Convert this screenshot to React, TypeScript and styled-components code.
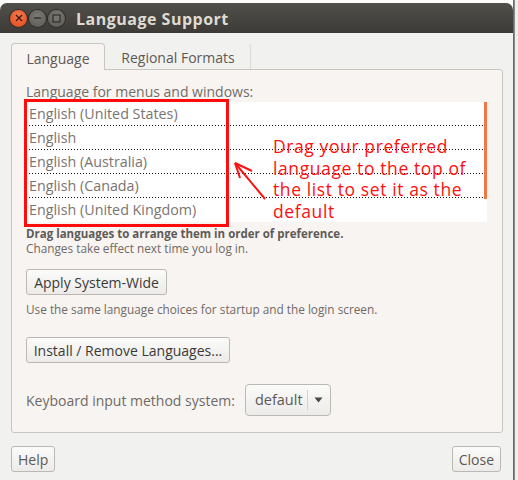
import React from "react";
import styled, { createGlobalStyle } from "styled-components";

const GlobalStyle = createGlobalStyle`
  html, body {
    margin: 0;
    padding: 0;
    background: #fbfbfb;
  }
  body {
    font-family: "Open Sans", "Noto Sans", sans-serif;
  }
`;

const languages = [
  "English (United States)",
  "English",
  "English (Australia)",
  "English (Canada)",
  "English (United Kingdom)",
];

const App: React.FC = () => {
  return (
    <>
      <GlobalStyle />
      <Screen>
        <Window>
          <TitleBar>
            <WinButtons>
              <WinButton kind="close">
                <svg width="8" height="8" viewBox="0 0 8 8">
                  <path d="M1 1L7 7M7 1L1 7" stroke="#3a1a10" strokeWidth="1.4" />
                </svg>
              </WinButton>
              <WinButton kind="other">
                <svg width="9" height="8" viewBox="0 0 9 8">
                  <path d="M1 4H8" stroke="#2e2d2a" strokeWidth="1.4" />
                </svg>
              </WinButton>
              <WinButton kind="other">
                <svg width="9" height="9" viewBox="0 0 9 9">
                  <rect x="1" y="1" width="7" height="7" fill="none" stroke="#2e2d2a" strokeWidth="1.2" />
                </svg>
              </WinButton>
            </WinButtons>
            <Title>Language Support</Title>
          </TitleBar>

          <Body>
            <Tabs>
              <Tab active>Language</Tab>
              <Tab>Regional Formats</Tab>
            </Tabs>
            <Panel>
              <Label>Language for menus and windows:</Label>
              <ListArea>
                <List>
                  {languages.map((l, i) => (
                    <Row key={l} last={i === languages.length - 1}>
                      <RowText>{l}</RowText>
                      <ScrollMark visible={i < 4} />
                    </Row>
                  ))}
                </List>
                <RedBox />
                <Arrow width="40" height="48" viewBox="0 0 40 48">
                  <path d="M33 46L3 10" stroke="#ff1010" strokeWidth="2" fill="none" />
                  <path d="M3 10L20 18M3 10L8 25" stroke="#ff1010" strokeWidth="2" fill="none" />
                </Arrow>
                <Note>
                  <NoteLine>Drag your preferred</NoteLine>
                  <NoteLine>language to the top of</NoteLine>
                  <NoteLine>the list to set it as the</NoteLine>
                  <NoteLine>default</NoteLine>
                </Note>
              </ListArea>
              <BoldHint>Drag languages to arrange them in order of preference.</BoldHint>
              <Hint>Changes take effect next time you log in.</Hint>

              <Button wide={141} gap={13}>Apply System-Wide</Button>
              <Hint style={{ marginTop: 7 }}>
                Use the same language choices for startup and the login screen.
              </Hint>

              <Button wide={204} gap={20}>Install / Remove Languages...</Button>

              <KeyboardRow>
                <Text>Keyboard input method system:</Text>
                <Combo>
                  <ComboValue>default</ComboValue>
                  <ComboArrow>
                    <svg width="9" height="6" viewBox="0 0 9 6">
                      <path d="M0.5 0.5H8.5L4.5 5.5Z" fill="#4a4744" />
                    </svg>
                  </ComboArrow>
                </Combo>
              </KeyboardRow>
            </Panel>

            <Footer>
              <SmallButton>Help</SmallButton>
              <SmallButton>Close</SmallButton>
            </Footer>
          </Body>
        </Window>
        <Edge>
          <EdgeLine />
          <EdgeBg />
        </Edge>
      </Screen>
    </>
  );
};

export default App;

const Screen = styled.div`
  display: flex;
  width: 518px;
  height: 480px;
  overflow: hidden;
`;

const Window = styled.div`
  width: 513px;
  display: flex;
  flex-direction: column;
  padding-top: 3px;
`;

const TitleBar = styled.div`
  height: 30px;
  display: flex;
  align-items: center;
  background: linear-gradient(#504f4a, #3c3b37);
  border-radius: 7px 7px 0 0;
  padding-left: 10px;
`;

const WinButtons = styled.div`
  display: flex;
  gap: 2px;
`;

const WinButton = styled.div<{ kind: "close" | "other" }>`
  width: 17px;
  height: 17px;
  border-radius: 50%;
  display: flex;
  align-items: center;
  justify-content: center;
  background: ${({ kind }) =>
    kind === "close"
      ? "radial-gradient(circle at 50% 35%, #f77a4a, #e0461a)"
      : "radial-gradient(circle at 50% 35%, #7a7973, #5a5954)"};
  box-shadow: 0 0 0 1px #2e2d29;
`;

const Title = styled.div`
  margin-left: 11px;
  margin-top: 1px;
  color: #dfdbd2;
  font-weight: 700;
  font-size: 16px;
  letter-spacing: 0.5px;
`;

const Body = styled.div`
  flex: 1;
  background: #f1f1ef;
  padding: 10px 10px 0 11px;
  display: flex;
  flex-direction: column;
`;

const Tabs = styled.div`
  display: flex;
  height: 27px;
  position: relative;
  z-index: 1;
`;

const Tab = styled.div<{ active?: boolean }>`
  font-size: 14px;
  color: #5d5955;
  display: flex;
  align-items: center;
  padding: 2px 14px 0 14px;
  height: ${({ active }) => (active ? "27px" : "26px")};
  box-sizing: border-box;
  width: ${({ active }) => (active ? "94px" : "146px")};
  justify-content: center;
  background: ${({ active }) => (active ? "#f8f4f2" : "transparent")};
  border: 1px solid ${({ active }) => (active ? "#c9c5c1" : "transparent")};
  border-bottom: none;
  border-right: 1px solid ${({ active }) => (active ? "#c9c5c1" : "#dcd9d6")};
  border-radius: 4px 4px 0 0;
`;

const Panel = styled.div`
  height: 364px;
  box-sizing: border-box;
  background: #f8f4f2;
  border: 1px solid #c9c5c1;
  border-radius: 0 3px 3px 3px;
  margin-top: -1px;
  padding: 13px 15px 0 14px;
  display: flex;
  flex-direction: column;
  align-items: flex-start;
`;

const Label = styled.div`
  font-size: 14px;
  color: #726d69;
  line-height: 18px;
  height: 19px;
`;

const ListArea = styled.div`
  position: relative;
  width: 461px;
  margin-bottom: 1px;
`;

const List = styled.div`
  background: #ffffff;
  display: flex;
  flex-direction: column;
`;

const Row = styled.div<{ last?: boolean }>`
  height: 24px;
  display: flex;
  align-items: center;
  margin-right: 3px;
  position: relative;

  &::after {
    content: "";
    display: ${({ last }) => (last ? "none" : "block")};
    position: absolute;
    left: 0;
    right: 0;
    bottom: 0;
    height: 1px;
    background: repeating-linear-gradient(90deg, #111 0 1px, transparent 1px 3px);
  }
`;

const RowText = styled.span`
  font-size: 14.3px;
  color: #7a7470;
  padding-left: 3px;
  margin-top: -2px;
`;

const ScrollMark = styled.span<{ visible: boolean }>`
  position: absolute;
  right: -3px;
  top: 0;
  bottom: -1px;
  width: 3px;
  background: ${({ visible }) => (visible ? "#f07746" : "transparent")};
`;

const RedBox = styled.div`
  position: absolute;
  left: -2px;
  top: -3px;
  width: 205px;
  height: 128px;
  box-sizing: border-box;
  border: 3px solid #ff0d0d;
`;

const Arrow = styled.svg`
  position: absolute;
  left: 206px;
  top: 51px;
`;

const Note = styled.div`
  position: absolute;
  left: 247px;
  top: 34px;
  color: #ff1010;
  font-size: 17.5px;
  letter-spacing: 0.6px;
  display: flex;
  flex-direction: column;
`;

const NoteLine = styled.span`
  line-height: 21.7px;
  white-space: nowrap;
`;

const BoldHint = styled.div`
  margin-top: 3px;
  font-size: 11.5px;
  font-weight: 700;
  color: #5f5b57;
  line-height: 15px;
`;

const Hint = styled.div`
  font-size: 11.8px;
  color: #6f6a66;
  line-height: 15px;
`;

const Button = styled.div<{ wide: number; gap: number }>`
  margin-top: ${({ gap }) => gap}px;
  width: ${({ wide }) => wide}px;
  height: 26px;
  box-sizing: border-box;
  border: 1px solid #bcb8b4;
  border-radius: 3px;
  background: linear-gradient(#fbfbfa, #ecebe9);
  font-size: 14px;
  color: #3c3a38;
  display: flex;
  align-items: center;
  justify-content: center;
`;

const KeyboardRow = styled.div`
  display: flex;
  align-items: center;
  gap: 10px;
  margin-top: 21px;
`;

const Text = styled.span`
  font-size: 14px;
  color: #6f6a66;
`;

const Combo = styled.div`
  height: 32px;
  width: 86px;
  box-sizing: border-box;
  border: 1px solid #bcb8b4;
  border-radius: 4px;
  background: linear-gradient(#fbfbfa, #ecebe9);
  display: flex;
  align-items: center;
`;

const ComboValue = styled.span`
  font-size: 14.5px;
  color: #5d5955;
  padding-left: 9px;
  width: 52px;
  border-right: 1px solid #d4d1ce;
  line-height: 20px;
`;

const ComboArrow = styled.span`
  flex: 1;
  display: flex;
  justify-content: center;
`;

const Footer = styled.div`
  display: flex;
  justify-content: space-between;
  margin-top: 13px;
  padding-right: 2px;
`;

const SmallButton = styled.div`
  height: 26px;
  box-sizing: border-box;
  padding: 0 6px;
  border: 1px solid #bcb8b4;
  border-radius: 3px;
  background: linear-gradient(#fbfbfa, #ecebe9);
  font-size: 14px;
  color: #5d5955;
  display: flex;
  align-items: center;
`;

const Edge = styled.div`
  display: flex;
  flex: 1;
`;

const EdgeLine = styled.div`
  width: 2px;
  background: linear-gradient(90deg, #5a5a58, #9a9a98);
`;

const EdgeBg = styled.div`
  flex: 1;
  background: #eeeeec;
`;
